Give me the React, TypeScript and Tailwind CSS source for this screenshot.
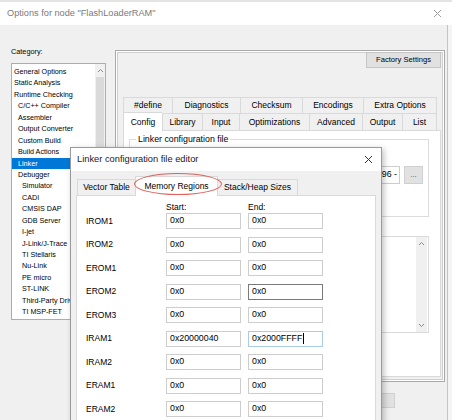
const categories: [string, number][] = [
  ['General Options', 0],
  ['Static Analysis', 0],
  ['Runtime Checking', 0],
  ['C/C++ Compiler', 1],
  ['Assembler', 1],
  ['Output Converter', 1],
  ['Custom Build', 1],
  ['Build Actions', 1],
  ['Linker', 1],
  ['Debugger', 1],
  ['Simulator', 2],
  ['CADI', 2],
  ['CMSIS DAP', 2],
  ['GDB Server', 2],
  ['I-jet', 2],
  ['J-Link/J-Trace', 2],
  ['TI Stellaris', 2],
  ['Nu-Link', 2],
  ['PE micro', 2],
  ['ST-LINK', 2],
  ['Third-Party Driver', 2],
  ['TI MSP-FET', 2],
]

const indent = ['pl-[2px]', 'pl-[6px]', 'pl-[10px]']

const tabsTop = [
  { label: '#define', w: 'w-[49px]' },
  { label: 'Diagnostics', w: 'w-[68px]' },
  { label: 'Checksum', w: 'w-[62px]' },
  { label: 'Encodings', w: 'w-[61px]' },
  { label: 'Extra Options', w: 'w-[74px]' },
]

const tabsBottom = [
  { label: 'Config', w: 'w-[39px]', active: true },
  { label: 'Library', w: 'w-[40px]' },
  { label: 'Input', w: 'w-[37px]' },
  { label: 'Optimizations', w: 'w-[70px]' },
  { label: 'Advanced', w: 'w-[53px]' },
  { label: 'Output', w: 'w-[40px]' },
  { label: 'List', w: 'w-[35px]' },
]

const regions = [
  { name: 'IROM1', start: '0x0', end: '0x0' },
  { name: 'IROM2', start: '0x0', end: '0x0' },
  { name: 'EROM1', start: '0x0', end: '0x0' },
  { name: 'EROM2', start: '0x0', end: '0x0', hover: true },
  { name: 'EROM3', start: '0x0', end: '0x0' },
  { name: 'IRAM1', start: '0x20000040', end: '0x2000FFFF', focus: true },
  { name: 'IRAM2', start: '0x0', end: '0x0' },
  { name: 'ERAM1', start: '0x0', end: '0x0' },
  { name: 'ERAM2', start: '0x0', end: '0x0' },
]

function CloseX({ className }: { className: string }) {
  return (
    <svg width="9" height="9" viewBox="0 0 9 9" className={className}>
      <path d="M1 1L8 8M8 1L1 8" stroke="currentColor" strokeWidth="1" />
    </svg>
  )
}

function Chevron({ down }: { down?: boolean }) {
  return (
    <svg width="7" height="5" viewBox="0 0 7 5">
      <path d={down ? 'M1 1L3.5 3.5L6 1' : 'M1 4L3.5 1.5L6 4'} stroke="#8a8a8a" strokeWidth="1" fill="none" />
    </svg>
  )
}

function RegionInput({ value, hover, focus }: { value: string; hover?: boolean; focus?: boolean }) {
  const border = focus ? 'border-[#a8cbe8]' : hover ? 'border-[#7a7a7a]' : 'border-[#cdcdcd]'
  return (
    <div className={`w-[75px] h-[16px] border ${border} bg-white flex items-center pl-[3px] text-[8.8px]`}>
      <span>{value}</span>
      {focus && <span className="inline-block w-px h-[11px] bg-black ml-[1px]" />}
    </div>
  )
}

function EditorDialog() {
  return (
    <div className="absolute left-[70px] top-[147px] w-[312px] h-[290px] border border-[#9a9a9a] bg-[#f0f0f0] shadow-[2px_2px_6px_rgba(0,0,0,0.25)]">
      <div className="h-[23px] bg-white flex items-center pl-[6px]">
        <span className="text-[9.3px] text-[#1a1a1a]">Linker configuration file editor</span>
        <CloseX className="ml-auto mr-[8px] text-[#333]" />
      </div>

      <div className="flex items-end pl-[6px] pt-[5px] h-[24px]">
        <div className="w-[58px] h-[16px] border-l border-t border-[#d9d9d9] flex items-center justify-center text-[8.5px]">
          Vector Table
        </div>
        <div className="relative z-10 w-[83px] h-[20px] -mb-px border-l border-t border-r border-[#d9d9d9] bg-white flex items-center justify-center text-[8.5px]">
          Memory Regions
        </div>
        <div className="w-[80px] h-[16px] border-t border-r border-[#d9d9d9] flex items-center justify-center text-[8.5px]">
          Stack/Heap Sizes
        </div>
      </div>

      <div className="ml-[5px] w-[300px] h-[260px] border border-[#d9d9d9] bg-white pl-[9px] pt-[6px]">
        <div className="flex h-[11px] leading-[11px] text-[8.5px]">
          <span className="w-[80px]" />
          <span className="w-[82px]">Start:</span>
          <span>End:</span>
        </div>
        <div className="flex flex-col gap-[7.5px]">
          {regions.map((r) => (
            <div key={r.name} className="flex items-center h-[16px]">
              <span className="w-[80px] text-[8.5px]">{r.name}</span>
              <RegionInput value={r.start} />
              <div className="w-[7px]" />
              <RegionInput value={r.end} hover={r.hover} focus={r.focus} />
            </div>
          ))}
        </div>
      </div>

      <div className="absolute z-20 left-[63px] top-[25px] w-[88px] h-[22px] border-[1.5px] border-[#e0605a] rounded-[50%]" />
    </div>
  )
}

export default function App() {
  return (
    <div className="relative w-[452px] h-[420px] overflow-hidden bg-[#f4f4f4] font-['Liberation_Sans',Arial,sans-serif] text-black">
      <div className="h-[25px] bg-white border-t-2 border-[#e4e4e4] flex items-center pl-[7px]">
        <span className="text-[9.2px] text-[#7b7b7b]">Options for node "FlashLoaderRAM"</span>
        <CloseX className="ml-auto mr-[10px] text-[#9a9a9a]" />
      </div>

      <div className="flex w-[448px] h-[395px] bg-[#f0f0f0] border-r border-[#c4c4c4]">
        <div className="ml-[11px] w-[95px] flex flex-col">
          <div className="pt-[22px] text-[7.3px] leading-[10px]">Category:</div>
          <div className="mt-[6px] h-[257px] border border-[#adadad] bg-white flex">
            <div className="flex-1 overflow-hidden pt-[2px]">
              {categories.map(([name, level]) => (
                <div
                  key={name}
                  className={`h-[11.45px] leading-[11.45px] text-[7.2px] whitespace-nowrap ${indent[level]} ${
                    name === 'Linker' ? 'bg-[#0078d7] text-white' : ''
                  }`}
                >
                  {name}
                </div>
              ))}
            </div>
            <div className="w-[10px] flex flex-col bg-[#f0f0f0]">
              <div className="h-[13px] flex items-center justify-center">
                <Chevron />
              </div>
              <div className="h-[180px] mx-[1px] bg-[#dadada]" />
            </div>
          </div>
        </div>

        <div className="ml-[9px] pt-[25px] w-[330px] flex flex-col">
          <div className="h-[332px] border border-[#a9a9a9] shadow-[inset_0_0_0_1px_#fff,inset_0_0_0_2px_#cfcfcf] flex flex-col">
            <div className="self-end mr-[3px] mt-[1px] w-[75px] h-[16px] border border-[#c4c4c4] bg-[#e1e1e1] flex items-center justify-center text-[7.6px]">
              Factory Settings
            </div>

            <div className="mt-[29px] ml-[7px]">
              <div className="flex h-[16px]">
                {tabsTop.map((t, i) => (
                  <div
                    key={t.label}
                    className={`${t.w} h-[16px] border-l border-t border-[#d9d9d9] flex items-center justify-center text-[8.5px] ${
                      i === tabsTop.length - 1 ? 'border-r' : ''
                    }`}
                  >
                    {t.label}
                  </div>
                ))}
              </div>
              <div className="flex items-end h-[17px]">
                {tabsBottom.map((t, i) => (
                  <div
                    key={t.label}
                    className={`${t.w} border-l border-t border-[#d9d9d9] flex items-center justify-center text-[8.5px] ${
                      i === tabsBottom.length - 1 ? 'border-r' : ''
                    } ${t.active ? 'relative z-10 h-[19px] -mb-px bg-white' : 'h-[17px]'}`}
                  >
                    {t.label}
                  </div>
                ))}
              </div>
              <div className="w-[318px] h-[247px] border border-[#d9d9d9] bg-white">
                <fieldset className="ml-[5px] mt-[3px] w-[300px] border border-[#dcdcdc] pb-[32px]">
                  <legend className="ml-[6px] px-[2px] text-[8.8px] leading-[10px]">Linker configuration file</legend>
                  <div className="mt-[22px] flex justify-end gap-[4px] pr-[5px]">
                    <div className="w-[250px] h-[18px] border border-[#cdcdcd] bg-white flex items-center justify-end pr-[2px] text-[8.8px] whitespace-nowrap overflow-hidden">
                      $TOOLKIT_DIR$\config\linker\x96 -
                    </div>
                    <div className="w-[19px] h-[18px] border border-[#d0d0d0] bg-[#e1e1e1] flex items-center justify-center text-[8px] text-[#555]">
                      ...
                    </div>
                  </div>
                </fieldset>

                <div className="mt-[19px] ml-[5px] w-[300px] h-[97px] border border-[#dadada] bg-white flex justify-end">
                  <div className="w-[11px] mr-px bg-[#f0f0f0] flex flex-col items-center justify-between py-[4px]">
                    <Chevron />
                    <Chevron down />
                  </div>
                </div>
              </div>
            </div>
          </div>

          <div className="mt-[11px] flex justify-end pr-[50px]">
            <div className="w-[75px] h-[15px] border border-[#d0d0d0] bg-[#e1e1e1] flex items-center justify-center text-[7.6px]">
              OK
            </div>
          </div>
        </div>
      </div>

      <EditorDialog />
    </div>
  )
}
